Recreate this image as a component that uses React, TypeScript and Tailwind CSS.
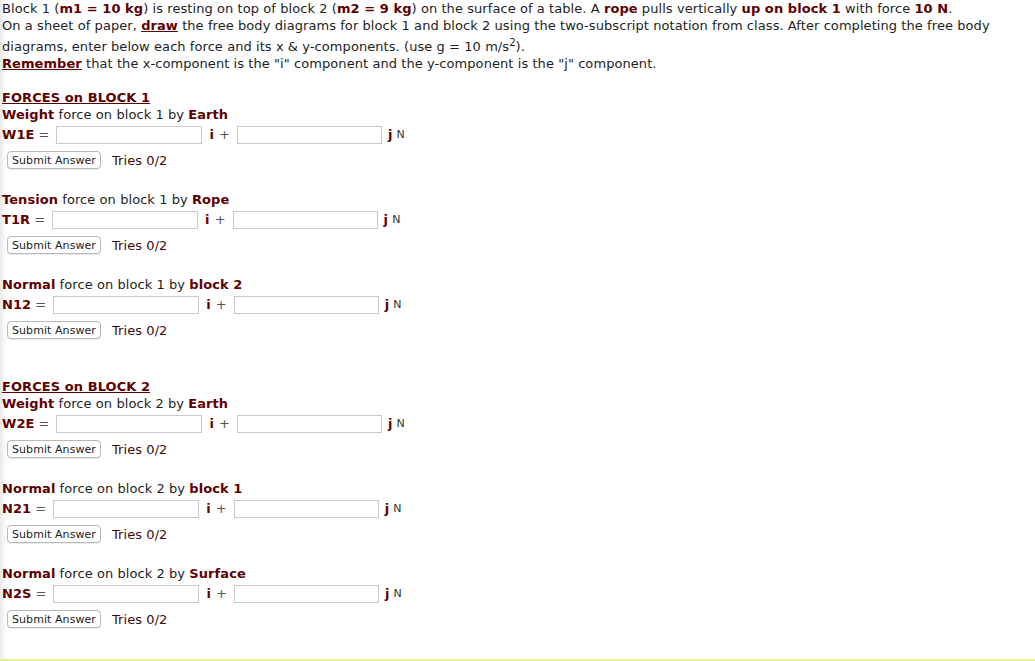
import React from "react";

const B = ({ children }: { children: React.ReactNode }) => (
  <b className="font-bold text-[#5e0000]">{children}</b>
);

function Row({ label }: { label: string }) {
  return (
    <div className="flex h-[23px] items-center">
      <B>{label}</B>
      <span className="ml-[4px] text-[#555]">=</span>
      <input className="ml-[7px] h-[18px] w-[146px] border border-[#c9c9c9] bg-white outline-none" />
      <span className="ml-[7px] font-bold text-[#5e0000]">i</span>
      <span className="ml-[5px] text-[#555]">+</span>
      <input className="ml-[7px] h-[18px] w-[145px] border border-[#c9c9c9] bg-white outline-none" />
      <span className="ml-[6px] font-bold text-[#5e0000]">j</span>
      <span className="ml-[4px] text-[11px] text-[#333]">N</span>
    </div>
  );
}

function Item({
  kind,
  target,
  by,
  label,
}: {
  kind: string;
  target: string;
  by: string;
  label: string;
}) {
  return (
    <div className="pb-[22px]">
      <div className="h-[17px]">
        <B>{kind}</B> force on {target} by <B>{by}</B>
      </div>
      <Row label={label} />
      <div className="mt-[5px] flex h-[18px] items-center">
        <button className="ml-[5px] flex h-[18px] w-[94px] items-center justify-center rounded-[4px] border border-[#b8b8b8] bg-white text-[11px] leading-none text-[#222] shadow-[0_1px_0_rgba(0,0,0,0.08)] [font-family:'DejaVu_Sans',sans-serif]">
          Submit Answer
        </button>
        <span className="ml-[11px] text-[#3d0a0a]">Tries 0/2</span>
      </div>
    </div>
  );
}

export default function App() {
  return (
    <div className="relative h-[661px] w-[1035px] overflow-hidden border-b-2 border-[#e6ef8c] bg-white pl-[2px] text-[13px] leading-[17px] tracking-[0.07px] text-[#1e1e1e] shadow-[inset_7px_0_6px_-5px_rgba(0,0,0,0.12)] [font-family:'DejaVu_Sans','Verdana',sans-serif]">
      <div className="h-[17px] whitespace-nowrap">
        Block 1 (<B>m1 = 10 kg</B>) is resting on top of block 2 (<B>m2 = 9 kg</B>) on the
        surface of a table. A <B>rope</B> pulls vertically <B>up on block 1</B> with force{" "}
        <B>10 N</B>.
      </div>
      <div className="h-[17px] whitespace-nowrap">
        On a sheet of paper, <B><u>draw</u></B> the free body diagrams for block 1 and block 2
        using the two-subscript notation from class. After completing the free body
      </div>
      <div className="mt-[4px] h-[17px] whitespace-nowrap">
        diagrams, enter below each force and its x &amp; y-components. (use g = 10 m/s
        <sup className="text-[10px]">2</sup>).
      </div>
      <div className="h-[17px] whitespace-nowrap">
        <B><u>Remember</u></B> that the x-component is the "i" component and the y-component is
        the "j" component.
      </div>

      <div className="mt-[17px]">
        <div className="h-[17px]">
          <B><u>FORCES on BLOCK 1</u></B>
        </div>
        <Item kind="Weight" target="block 1" by="Earth" label="W1E" />
        <Item kind="Tension" target="block 1" by="Rope" label="T1R" />
        <Item kind="Normal" target="block 1" by="block 2" label="N12" />
      </div>

      <div className="mt-[17px]">
        <div className="h-[17px]">
          <B><u>FORCES on BLOCK 2</u></B>
        </div>
        <Item kind="Weight" target="block 2" by="Earth" label="W2E" />
        <Item kind="Normal" target="block 2" by="block 1" label="N21" />
        <Item kind="Normal" target="block 2" by="Surface" label="N2S" />
      </div>
    </div>
  );
}
